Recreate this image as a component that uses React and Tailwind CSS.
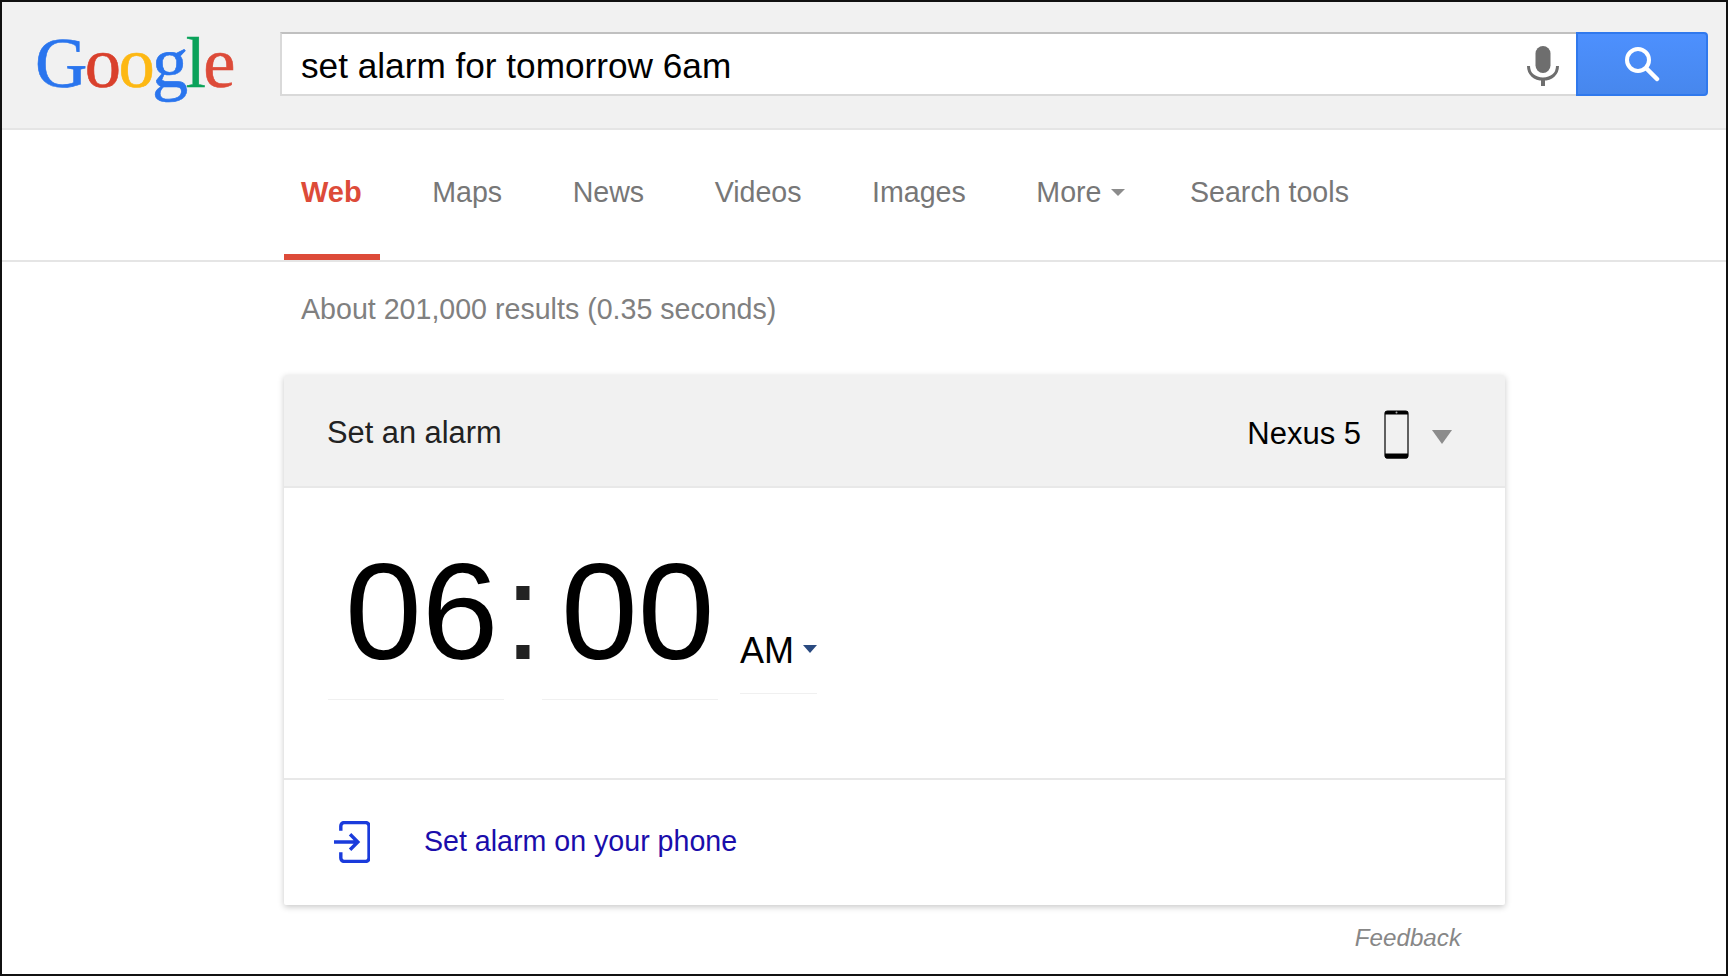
import React from "react";

const sans = { fontFamily: '"Liberation Sans", Arial, sans-serif' };

function Logo() {
  return (
    <div className="w-[199px] ml-[33px] text-[72.5px] leading-none tracking-[-2.6px] whitespace-nowrap mt-[-4px] [-webkit-text-stroke:0.6px]" style={{ fontFamily: '"Liberation Serif", serif' }}>
      <span className="text-[#2a75ee]">G</span>
      <span className="text-[#d9402c]">o</span>
      <span className="text-[#fdb813]">o</span>
      <span className="text-[#2a75ee]">g</span>
      <span className="text-[#0aa25a]">l</span>
      <span className="text-[#dd4b39]">e</span>
    </div>
  );
}

function Mic() {
  return (
    <svg width="32" height="40" viewBox="0 0 32 40" fill="none" className="mr-[17px] mt-[3px]">
      <rect x="8.500" y="0" width="15" height="27" rx="7.500" fill="#6e6e6e" />
      <path d="M1.500 20c0 8 6 13 14.500 13s14.500-5 14.500-13" stroke="#6e6e6e" strokeWidth="3" />
      <rect x="14" y="32" width="4" height="8" fill="#6e6e6e" />
    </svg>
  );
}

function SearchGlyph() {
  return (
    <svg width="36" height="36" viewBox="0 0 36 36" fill="none">
      <circle cx="14" cy="14" r="11" stroke="#fff" strokeWidth="4" />
      <path d="M22.500 22.500 33 33" stroke="#fff" strokeWidth="4.500" strokeLinecap="round" />
    </svg>
  );
}

function Phone() {
  return (
    <svg width="25" height="49" viewBox="0 0 25 49">
      <rect x="1" y="1" width="23" height="47" rx="2.500" fill="none" stroke="#000" strokeWidth="1.200" />
      <path d="M1 3.500A2.500 2.500 0 0 1 3.500 1h18A2.500 2.500 0 0 1 24 3.500V4.500H1z" fill="#000" />
      <path d="M1 43.500h23v2.500a2.500 2.500 0 0 1-2.500 2.500h-18A2.500 2.500 0 0 1 1 46z" fill="#000" />
      <circle cx="12.500" cy="2.500" r="1" fill="#aaa" />
    </svg>
  );
}

function EnterIcon() {
  return (
    <svg width="36" height="42" viewBox="0 0 37 43" fill="none" className="shrink-0">
      <path d="M7 10V5a3.500 3.500 0 0 1 3.500-3.500h22A3.500 3.500 0 0 1 36 5v33a3.500 3.500 0 0 1-3.500 3.500h-22A3.500 3.500 0 0 1 7 38v-6" stroke="#1a3bdc" strokeWidth="3.500" />
      <path d="M0 21.500h24M16.500 13.500l8 8-8 8" stroke="#1a3bdc" strokeWidth="3.500" />
    </svg>
  );
}

function Tab({ children, active }) {
  return (
    <div className={active
      ? "h-[130px] flex items-center pl-[17px] pr-[18px] -mr-[1px] text-[29px] text-[#dd4b39] font-bold border-b-[6px] border-[#dd4b39]"
      : "h-[130px] flex items-center px-[17px] text-[#777777] border-b-[6px] border-transparent"}>
      {children}
    </div>
  );
}

export default function App() {
  return (
    <div className="w-[1728px] h-[976px] box-border border-2 border-[#111111] bg-white overflow-hidden" style={sans}>
      <header className="h-[126px] bg-[#f1f1f1] border-b-2 border-[#e5e5e5] flex items-center box-content">
        <Logo />
        <div className="ml-[46px] -mt-[2px] w-[1296px] h-[64px] box-border flex items-center bg-white border-2 border-[#d9d9d9] border-t-[#c0c0c0] border-r-0">
          <div className="flex-1 pl-[19px] pt-[3px] text-[35.200px] text-black leading-none">set alarm for tomorrow 6am</div>
          <Mic />
        </div>
        <button className="w-[132px] h-[64px] -mt-[2px] box-border flex items-center justify-center rounded-r-[4px] border-2 border-[#3079ed] bg-gradient-to-b from-[#4d90fe] to-[#4787ed]">
          <SearchGlyph />
        </button>
      </header>

      <nav className="h-[132px] box-border border-b-2 border-[#e5e5e5] flex items-start pl-[282px] gap-[36.500px] text-[28.600px] leading-none">
        <Tab active>Web</Tab>
        <Tab>Maps</Tab>
        <Tab>News</Tab>
        <Tab>Videos</Tab>
        <Tab>Images</Tab>
        <Tab>
          More
          <span className="ml-[10px] -mr-[6px] mt-[1px] w-0 h-0 border-x-[7.500px] border-x-transparent border-t-[7px] border-t-[#8c8c8c]" />
        </Tab>
        <Tab>Search tools</Tab>
      </nav>

      <div className="pl-[299px] pt-[30px] text-[28.600px] leading-[34px] text-[#808080]">About 201,000 results (0.35 seconds)</div>

      <section className="mt-[49px] ml-[282px] w-[1221px] h-[530px] bg-white rounded-[2px] shadow-[0_2px_6px_rgba(0,0,0,0.22)] flex flex-col">
        <div className="h-[113px] shrink-0 box-border bg-[#f1f1f1] border-b-2 border-[#e8e8e8] flex items-center pl-[43px] pr-[53px] pt-[8px] rounded-t-[2px]">
          <div className="text-[30.800px] text-[#222222] mt-[-3px]">Set an alarm</div>
          <div className="ml-auto flex items-center text-[31px] text-black">
            <span>Nexus 5</span>
            <span className="ml-[23px] mt-[-1px]"><Phone /></span>
            <span className="ml-[23px] mt-[4px] w-0 h-0 border-x-[10px] border-x-transparent border-t-[14px] border-t-[#8c8c8c]" />
          </div>
        </div>

        <div className="h-[292px] shrink-0 box-border border-b-2 border-[#e8e8e8] pl-[44px] pt-[57px] flex items-start">
          <div className="w-[176px] h-[155px] box-border pl-[17px] border-b border-[#f0f0f0] text-[138px] leading-[132px] text-black">06</div>
          <div className="w-[38px] flex justify-center text-[138px] leading-[132px] text-[#222222]">:</div>
          <div className="w-[176px] h-[155px] box-border pl-[19px] border-b border-[#f0f0f0] text-[138px] leading-[132px] text-black">00</div>
          <div className="ml-[22px] mt-[84px] w-[77px] h-[65px] border-b border-[#f0f0f0] flex items-start text-[36px] leading-[44px] text-black">
            AM
            <span className="ml-[9px] mt-[16px] w-0 h-0 border-x-[7.500px] border-x-transparent border-t-[8px] border-t-[#2a4a80]" />
          </div>
        </div>

        <div className="flex-1 flex items-center pl-[50px] pb-[2px]">
          <EnterIcon />
          <a className="ml-[54px] text-[28.600px] text-[#1a0dab]">Set alarm on your phone</a>
        </div>
      </section>

      <div className="w-[1503px] pr-[44px] box-border mt-[18px] text-right italic text-[24.200px] leading-[30px] text-[#878787]">Feedback</div>
    </div>
  );
}
